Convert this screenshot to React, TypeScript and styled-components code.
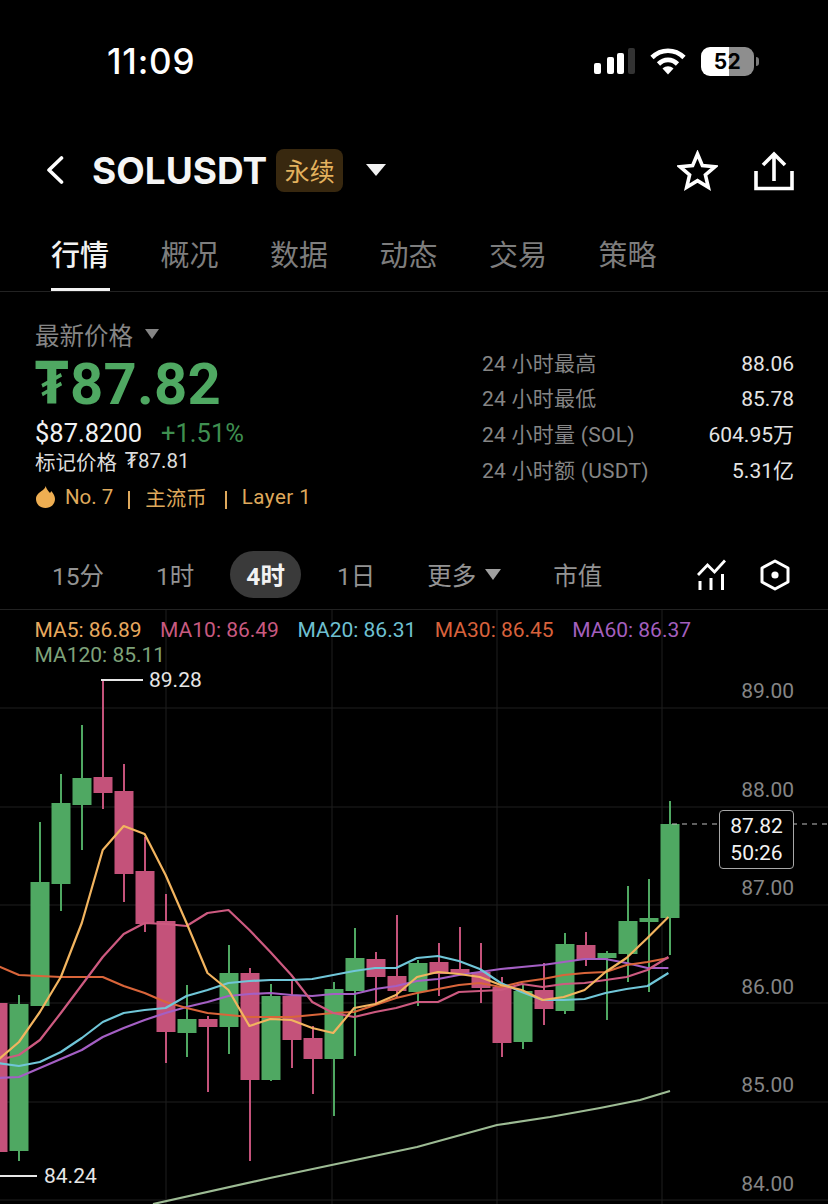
import React from "react";
import styled, { createGlobalStyle } from "styled-components";

const Global = createGlobalStyle`
  html, body { margin: 0; padding: 0; background: #000; }
  #root { width: 828px; height: 1204px; overflow: hidden; }
  * { box-sizing: border-box; }
`;

const LATIN = `Roboto, "Noto Sans CJK SC", "DejaVu Sans", sans-serif`;

const Page = styled.div`
  width: 828px;
  height: 1204px;
  background: #000;
  color: #fff;
  display: flex;
  flex-direction: column;
  font-family: ${LATIN};
  overflow: hidden;
`;

/* status bar */
const StatusBar = styled.div`
  height: 122px;
  display: flex;
  align-items: center;
  padding: 0 74px 0 107px;
`;
const Clock = styled.div`
  font-family: Inter, sans-serif;
  font-size: 35px;
  font-weight: 500;
  letter-spacing: 0.8px;
  flex: 1;
`;
const StatusIcons = styled.div`
  display: flex;
  align-items: center;
`;
const Battery = styled.div`
  position: relative;
  width: 53px;
  height: 29px;
  margin-left: 15px;
  border-radius: 9px;
  background: linear-gradient(90deg, #fff 52%, #8e8e8e 52%);
  color: #000;
  font-family: Inter, sans-serif;
  font-size: 21px;
  font-weight: 700;
  letter-spacing: 0.5px;
  display: flex;
  align-items: center;
  justify-content: center;
  &::after {
    content: "";
    position: absolute;
    left: 55px;
    top: 10px;
    width: 3px;
    height: 9px;
    border-radius: 0 3px 3px 0;
    background: #7a7a7a;
  }
`;

/* header */
const Header = styled.div`
  height: 96px;
  display: flex;
  align-items: center;
  padding: 0 34px 0 46px;
`;
const Symbol = styled.div`
  font-family: Inter, sans-serif;
  font-size: 37px;
  font-weight: 700;
  margin-left: 28px;
  color: #f5f5f5;
`;
const Badge = styled.div`
  width: 67px;
  height: 43px;
  margin-left: 9px;
  border-radius: 8px;
  background: #38280f;
  color: #e3b25e;
  font-size: 25px;
  display: flex;
  align-items: center;
  justify-content: center;
`;
const HeaderActions = styled.div`
  margin-left: auto;
  display: flex;
  align-items: center;
  gap: 36px;
`;
const Caret = styled.span<{ $w: number; $h: number; $c: string; $ml: number }>`
  display: inline-block;
  width: 0;
  height: 0;
  margin-left: ${(p) => p.$ml}px;
  border-left: ${(p) => p.$w / 2}px solid transparent;
  border-right: ${(p) => p.$w / 2}px solid transparent;
  border-top: ${(p) => p.$h}px solid ${(p) => p.$c};
`;

/* tabs */
const Tabs = styled.div`
  height: 74px;
  display: flex;
  gap: 51px;
  padding-left: 51px;
  border-bottom: 1px solid #222;
`;
const Tab = styled.div<{ $active?: boolean }>`
  height: 73px;
  font-size: 29px;
  width: 58.5px;
  white-space: nowrap;
  display: flex;
  align-items: center;
  color: ${(p) => (p.$active ? "#f2f2f2" : "#7d7d7d")};
  font-weight: ${(p) => (p.$active ? 500 : 400)};
  border-bottom: 3px solid ${(p) => (p.$active ? "#f2f2f2" : "transparent")};
`;

/* stats */
const Stats = styled.div`
  height: 248px;
  display: flex;
  justify-content: space-between;
  padding: 0 34px 0 35px;
`;
const PriceColumn = styled.div`
  padding-top: 24px;
  display: flex;
  flex-direction: column;
`;
const PriceLabel = styled.div`
  height: 36px;
  display: flex;
  align-items: center;
  font-size: 24.5px;
  color: #858585;
`;
const BigPrice = styled.div`
  height: 64px;
  display: flex;
  align-items: center;
  font-size: 58px;
  font-weight: 700;
  color: #4fa862;
  line-height: 1;
  letter-spacing: 0.2px;
`;
const Tugrik = styled.span`
  display: inline-block;
  width: 35px;
  transform: scaleX(0.83);
  transform-origin: left center;
`;
const FiatRow = styled.div`
  height: 34px;
  display: flex;
  align-items: center;
  font-size: 25.5px;
  color: #f2f2f2;
  gap: 19px;
`;
const Change = styled.span`
  color: #3f8f50;
`;
const MarkPrice = styled.div`
  height: 22px;
  display: flex;
  align-items: center;
  font-size: 20.5px;
  color: #dcdcdc;
  gap: 8px;
`;
const TagRow = styled.div`
  height: 34px;
  margin-top: 8px;
  display: flex;
  align-items: center;
  font-size: 20.5px;
  color: #dfa95c;
`;
const TagSep = styled.span<{ $l: number; $r: number }>`
  width: 2px;
  height: 18px;
  margin-top: 5px;
  background: #dfa95c;
  margin-left: ${(p) => p.$l}px;
  margin-right: ${(p) => p.$r}px;
`;
const TagLatin = styled.span`
  letter-spacing: 0.5px;
`;
const StatGrid = styled.div`
  width: 312px;
  padding-top: 54px;
  display: flex;
  flex-direction: column;
`;
const StatRow = styled.div`
  height: 35.6px;
  display: flex;
  align-items: center;
  justify-content: space-between;
  font-size: 21px;
  line-height: 26px;
`;
const StatLabel = styled.span`
  color: #858585;
  letter-spacing: 0.25px;
`;
const StatValue = styled.span`
  color: #e4e4e4;
`;

/* timeframes */
const Timeframes = styled.div`
  height: 70px;
  display: flex;
  align-items: center;
  padding-left: 35.5px;
  padding-right: 38px;
  gap: 19px;
  border-bottom: 1px solid #222;
`;
const Frame = styled.div<{ $active?: boolean }>`
  height: 47px;
  padding: 0 16.5px;
  border-radius: 24px;
  display: flex;
  align-items: center;
  font-size: 24.5px;
  white-space: nowrap;
  color: ${(p) => (p.$active ? "#f2f2f2" : "#939393")};
  background: ${(p) => (p.$active ? "#3a3a3a" : "transparent")};
  font-weight: ${(p) => (p.$active ? 700 : 400)};
`;
const FrameIcons = styled.div`
  margin-left: auto;
  display: flex;
  align-items: center;
  gap: 34px;
`;

/* chart */
const Chart = styled.div`
  position: relative;
  flex: 1;
  overflow: hidden;
`;
const ChartSvg = styled.svg`
  position: absolute;
  inset: 0;
  display: block;
`;
const Legend = styled.div`
  position: relative;
  padding: 8px 30px 0 34.5px;
  display: flex;
  flex-wrap: wrap;
  column-gap: 18.5px;
  font-size: 21px;
  line-height: 25px;
`;
const LegendItem = styled.span<{ $c: string }>`
  color: ${(p) => p.$c};
  white-space: nowrap;
`;
const PriceAxis = styled.div`
  position: absolute;
  right: 34px;
  top: 65px;
  display: flex;
  flex-direction: column;
  align-items: flex-end;
`;
const AxisLabel = styled.div`
  height: 98.5px;
  line-height: 32px;
  font-size: 21px;
  color: #858585;
`;
const PriceTag = styled.div`
  position: absolute;
  left: 719px;
  top: 200px;
  width: 75px;
  height: 59px;
  border: 1px solid #a8a8a8;
  border-radius: 4px;
  background: #000;
  color: #f2f2f2;
  font-size: 21px;
  line-height: 27px;
  display: flex;
  flex-direction: column;
  align-items: center;
  justify-content: center;
`;
const Extreme = styled.div<{ $x: number; $y: number }>`
  position: absolute;
  left: ${(p) => p.$x}px;
  top: ${(p) => p.$y}px;
  font-size: 21px;
  line-height: 28px;
  color: #e6e6e6;
`;

type C = [number, "g" | "r", number, number, number, number];
const candles: C[] = [
  [-2, "r", 1003, 1152, 1003, 1152],
  [19, "g", 995, 1161, 1004, 1151],
  [40, "g", 822, 1006, 882, 1006],
  [61, "g", 774, 911, 803, 884],
  [82, "g", 725, 850, 778, 805],
  [103, "r", 680, 809, 777, 793],
  [124, "r", 764, 902, 791, 874],
  [145, "r", 837, 932, 871, 924],
  [166, "r", 894, 1063, 921, 1032],
  [187, "g", 985, 1057, 1019, 1033],
  [208, "r", 1016, 1092, 1019, 1027],
  [229, "g", 945, 1054, 973, 1027],
  [250, "r", 968, 1161, 973, 1080],
  [271, "g", 984, 1081, 996, 1080],
  [292, "r", 980, 1068, 996, 1040],
  [313, "r", 1026, 1094, 1038, 1059],
  [334, "g", 982, 1116, 989, 1059],
  [355, "g", 928, 1056, 958, 991],
  [376, "r", 952, 1003, 959, 977],
  [397, "r", 915, 998, 976, 991],
  [418, "g", 960, 1006, 963, 992],
  [439, "r", 943, 996, 962, 974],
  [460, "r", 927, 975, 969, 974],
  [481, "r", 943, 1003, 972, 988],
  [502, "r", 977, 1057, 987, 1043],
  [523, "g", 985, 1049, 991, 1042],
  [544, "r", 963, 1025, 990, 1009],
  [565, "g", 933, 1014, 944, 1011],
  [586, "r", 932, 966, 945, 960],
  [607, "g", 951, 1020, 953, 958],
  [628, "g", 886, 982, 921, 954],
  [649, "g", 879, 992, 918, 922],
  [670, "g", 801, 955, 824, 918],
];

const xs = (start: number, ys: number[]) =>
  ys.map((y, i) => `${start + i * 20.95},${y}`).join(" ");

const lines: { c: string; pts: string }[] = [
  {
    c: "#9dbb94",
    pts: "153,1204 270,1178 417,1147 497,1125 550,1117 600,1108 640,1100 670,1091",
  },
  {
    c: "#a45fc4",
    pts: xs(-2, [1078, 1077, 1068, 1059, 1050, 1037, 1028, 1020, 1013, 1007, 1002, 996, 994, 993, 995, 996, 994, 994, 989, 986, 981, 979, 975, 972, 969, 967, 965, 962, 959, 959, 963, 968, 968]),
  },
  {
    c: "#d9653a",
    pts: xs(-2, [966, 975, 976, 977, 977, 977, 986, 993, 1002, 1008, 1013, 1015, 1017, 1017, 1017, 1015, 1013, 1012, 1005, 998, 993, 989, 985, 983, 987, 982, 979, 975, 973, 972, 965, 962, 958]),
  },
  {
    c: "#cd5a80",
    pts: xs(-2, [1060, 1055, 1040, 1013, 985, 957, 934, 923, 924, 926, 913, 910, 930, 952, 975, 1002, 1013, 1017, 1012, 1008, 1002, 1002, 992, 991, 990, 984, 987, 984, 983, 980, 977, 970, 957]),
  },
  {
    c: "#70c6d8",
    pts: xs(-2, [1063, 1066, 1062, 1052, 1038, 1022, 1013, 1010, 1008, 996, 990, 983, 981, 980, 980, 979, 975, 971, 968, 968, 958, 956, 961, 969, 983, 992, 1000, 1000, 999, 993, 989, 986, 973]),
  },
  {
    c: "#f2b45f",
    pts: xs(-2, [1060, 1042, 1012, 977, 923, 850, 826, 834, 875, 923, 973, 990, 1026, 1019, 1020, 1028, 1033, 1008, 1004, 995, 977, 972, 974, 977, 985, 990, 1000, 997, 990, 972, 958, 938, 917]),
  },
];

const ArrowBack = () => (
  <svg width="18" height="28" viewBox="0 0 18 28" fill="none">
    <path d="M15.5 2 3 14 15.5 26" stroke="#fff" strokeWidth="3.6" strokeLinecap="round" strokeLinejoin="round" />
  </svg>
);

const Legends = [
  ["MA5: 86.89", "#e8a95f"],
  ["MA10: 86.49", "#c85a80"],
  ["MA20: 86.31", "#6fc0d2"],
  ["MA30: 86.45", "#d8623c"],
  ["MA60: 86.37", "#a35fbe"],
  ["MA120: 85.11", "#7ea27a"],
];

export default function App() {
  return (
    <Page>
      <Global />
      <StatusBar>
        <Clock>11:09</Clock>
        <StatusIcons>
          <svg width="41" height="26" viewBox="0 0 41 26" style={{ marginRight: 15 }}>
            <rect x="0" y="15" width="7" height="11" rx="2" fill="#fff" />
            <rect x="13" y="9" width="7" height="17" rx="2" fill="#fff" />
            <rect x="23" y="5" width="7" height="21" rx="2" fill="#fff" />
            <rect x="34" y="0" width="7" height="26" rx="2" fill="#333" />
          </svg>
          <svg width="36" height="28" viewBox="0 0 36 28" fill="none">
            <path d="M2 10.5C11 1.5 25 1.5 34 10.5" stroke="#fff" strokeWidth="4.6" />
            <path d="M8.5 17C14 11.5 22 11.5 27.5 17" stroke="#fff" strokeWidth="4.6" />
            <path d="M12.5 21.5C16 18.5 20 18.5 23.5 21.5L18 27.5Z" fill="#fff" />
          </svg>
          <Battery>52</Battery>
        </StatusIcons>
      </StatusBar>

      <Header>
        <ArrowBack />
        <Symbol>SOLUSDT</Symbol>
        <Badge>永续</Badge>
        <Caret $w={20} $h={12} $c="#f2f2f2" $ml={23} />
        <HeaderActions>
          <svg width="41" height="41" viewBox="0 0 41 41" fill="none">
            <path d="M20.5 4 25.4 15.6 38 16.7 28.4 24.9 31.3 37.2 20.5 30.7 9.7 37.2 12.6 24.9 3 16.7 15.6 15.6Z" stroke="#fff" strokeWidth="3.6" strokeLinejoin="miter" />
          </svg>
          <svg width="40" height="41" viewBox="0 0 40 41" fill="none">
            <path d="M2 21V38.5H38V21" stroke="#fff" strokeWidth="3.6" />
            <path d="M20 31V4M9 15 20 4 31 15" stroke="#fff" strokeWidth="3.6" />
          </svg>
        </HeaderActions>
      </Header>

      <Tabs>
        <Tab $active>行情</Tab>
        <Tab>概况</Tab>
        <Tab>数据</Tab>
        <Tab>动态</Tab>
        <Tab>交易</Tab>
        <Tab>策略</Tab>
      </Tabs>

      <Stats>
        <PriceColumn>
          <PriceLabel>
            最新价格
            <Caret $w={14} $h={10} $c="#858585" $ml={12} />
          </PriceLabel>
          <BigPrice>
            <Tugrik>₮</Tugrik>87.82
          </BigPrice>
          <FiatRow>
            $87.8200
            <Change>+1.51%</Change>
          </FiatRow>
          <MarkPrice>
            标记价格
            <span>₮87.81</span>
          </MarkPrice>
          <TagRow>
            <svg width="19" height="22" viewBox="0 0 19 22" style={{ marginLeft: 1, marginRight: 10 }}>
              <path d="M9.5 0C11 4 12.5 5 14 7C14.6 6.2 15 5.6 15.2 5C17.6 7.5 19 10.2 19 13C19 18 15 22 9.5 22C4 22 0 18 0 13C0 9 3 7 5.5 5C7.5 3.4 9.5 2.5 9.5 0Z" fill="#eeae52" />
            </svg>
            No. 7
            <TagSep $l={15} $r={15} />
            主流币
            <TagSep $l={18} $r={15} />
            <TagLatin>Layer 1</TagLatin>
          </TagRow>
        </PriceColumn>
        <StatGrid>
          <StatRow>
            <StatLabel>24 小时最高</StatLabel>
            <StatValue>88.06</StatValue>
          </StatRow>
          <StatRow>
            <StatLabel>24 小时最低</StatLabel>
            <StatValue>85.78</StatValue>
          </StatRow>
          <StatRow>
            <StatLabel>24 小时量 (SOL)</StatLabel>
            <StatValue>604.95万</StatValue>
          </StatRow>
          <StatRow>
            <StatLabel>24 小时额 (USDT)</StatLabel>
            <StatValue>5.31亿</StatValue>
          </StatRow>
        </StatGrid>
      </Stats>

      <Timeframes>
        <Frame>15分</Frame>
        <Frame>1时</Frame>
        <Frame $active>4时</Frame>
        <Frame>1日</Frame>
        <Frame>
          更多
          <Caret $w={16} $h={11} $c="#a0a0a0" $ml={9} />
        </Frame>
        <Frame>市值</Frame>
        <FrameIcons>
          <svg width="29" height="31" viewBox="0 0 29 31" fill="none">
            <path d="M1 16 10.5 6 17.5 13 28 1.5" stroke="#fff" strokeWidth="2.8" />
            <path d="M3 22V31M14 19V31M25.5 15V31" stroke="#fff" strokeWidth="3" />
          </svg>
          <svg width="30" height="32" viewBox="0 0 30 32" fill="none">
            <path d="M15 2 28 9V23L15 30 2 23V9Z" stroke="#fff" strokeWidth="3" strokeLinejoin="round" />
            <circle cx="15" cy="16" r="3.6" fill="#fff" />
          </svg>
        </FrameIcons>
      </Timeframes>

      <Chart>
        <ChartSvg width="828" height="594" viewBox="0 610 828 594" fill="none">
          {[708, 807, 905, 1003, 1102, 1200].map((y) => (
            <line key={y} x1="0" x2="828" y1={y} y2={y} stroke="#1e1e1e" strokeWidth="1" />
          ))}
          {[166, 332, 497, 662].map((x) => (
            <line key={x} x1={x} x2={x} y1="610" y2="1204" stroke="#1e1e1e" strokeWidth="1" />
          ))}
          {candles.map(([x, k, wt, wb, bt, bb]) => {
            const col = k === "g" ? "#4fa862" : "#c4527a";
            return (
              <g key={x}>
                <rect x={x - 1} y={wt} width="2" height={wb - wt} fill={col} />
                <rect x={x - 9.5} y={bt} width="19" height={bb - bt} fill={col} />
              </g>
            );
          })}
          {lines.map((l) => (
            <polyline key={l.c} points={l.pts} stroke={l.c} strokeWidth="2.2" strokeLinejoin="round" />
          ))}
          <line x1="672" x2="828" y1="824" y2="824" stroke="#bdbdbd" strokeWidth="1.2" strokeDasharray="5 5" />
          <line x1="101" x2="143" y1="680" y2="680" stroke="#e6e6e6" strokeWidth="2" />
          <line x1="0" x2="37" y1="1176" y2="1176" stroke="#e6e6e6" strokeWidth="2" />
        </ChartSvg>
        <Legend>
          {Legends.map(([t, c]) => (
            <LegendItem key={t} $c={c}>
              {t}
            </LegendItem>
          ))}
        </Legend>
        <PriceAxis>
          <AxisLabel>89.00</AxisLabel>
          <AxisLabel>88.00</AxisLabel>
          <AxisLabel>87.00</AxisLabel>
          <AxisLabel>86.00</AxisLabel>
          <AxisLabel>85.00</AxisLabel>
          <AxisLabel>84.00</AxisLabel>
        </PriceAxis>
        <PriceTag>
          <span>87.82</span>
          <span>50:26</span>
        </PriceTag>
        <Extreme $x={149} $y={56}>
          89.28
        </Extreme>
        <Extreme $x={44} $y={552}>
          84.24
        </Extreme>
      </Chart>
    </Page>
  );
}
